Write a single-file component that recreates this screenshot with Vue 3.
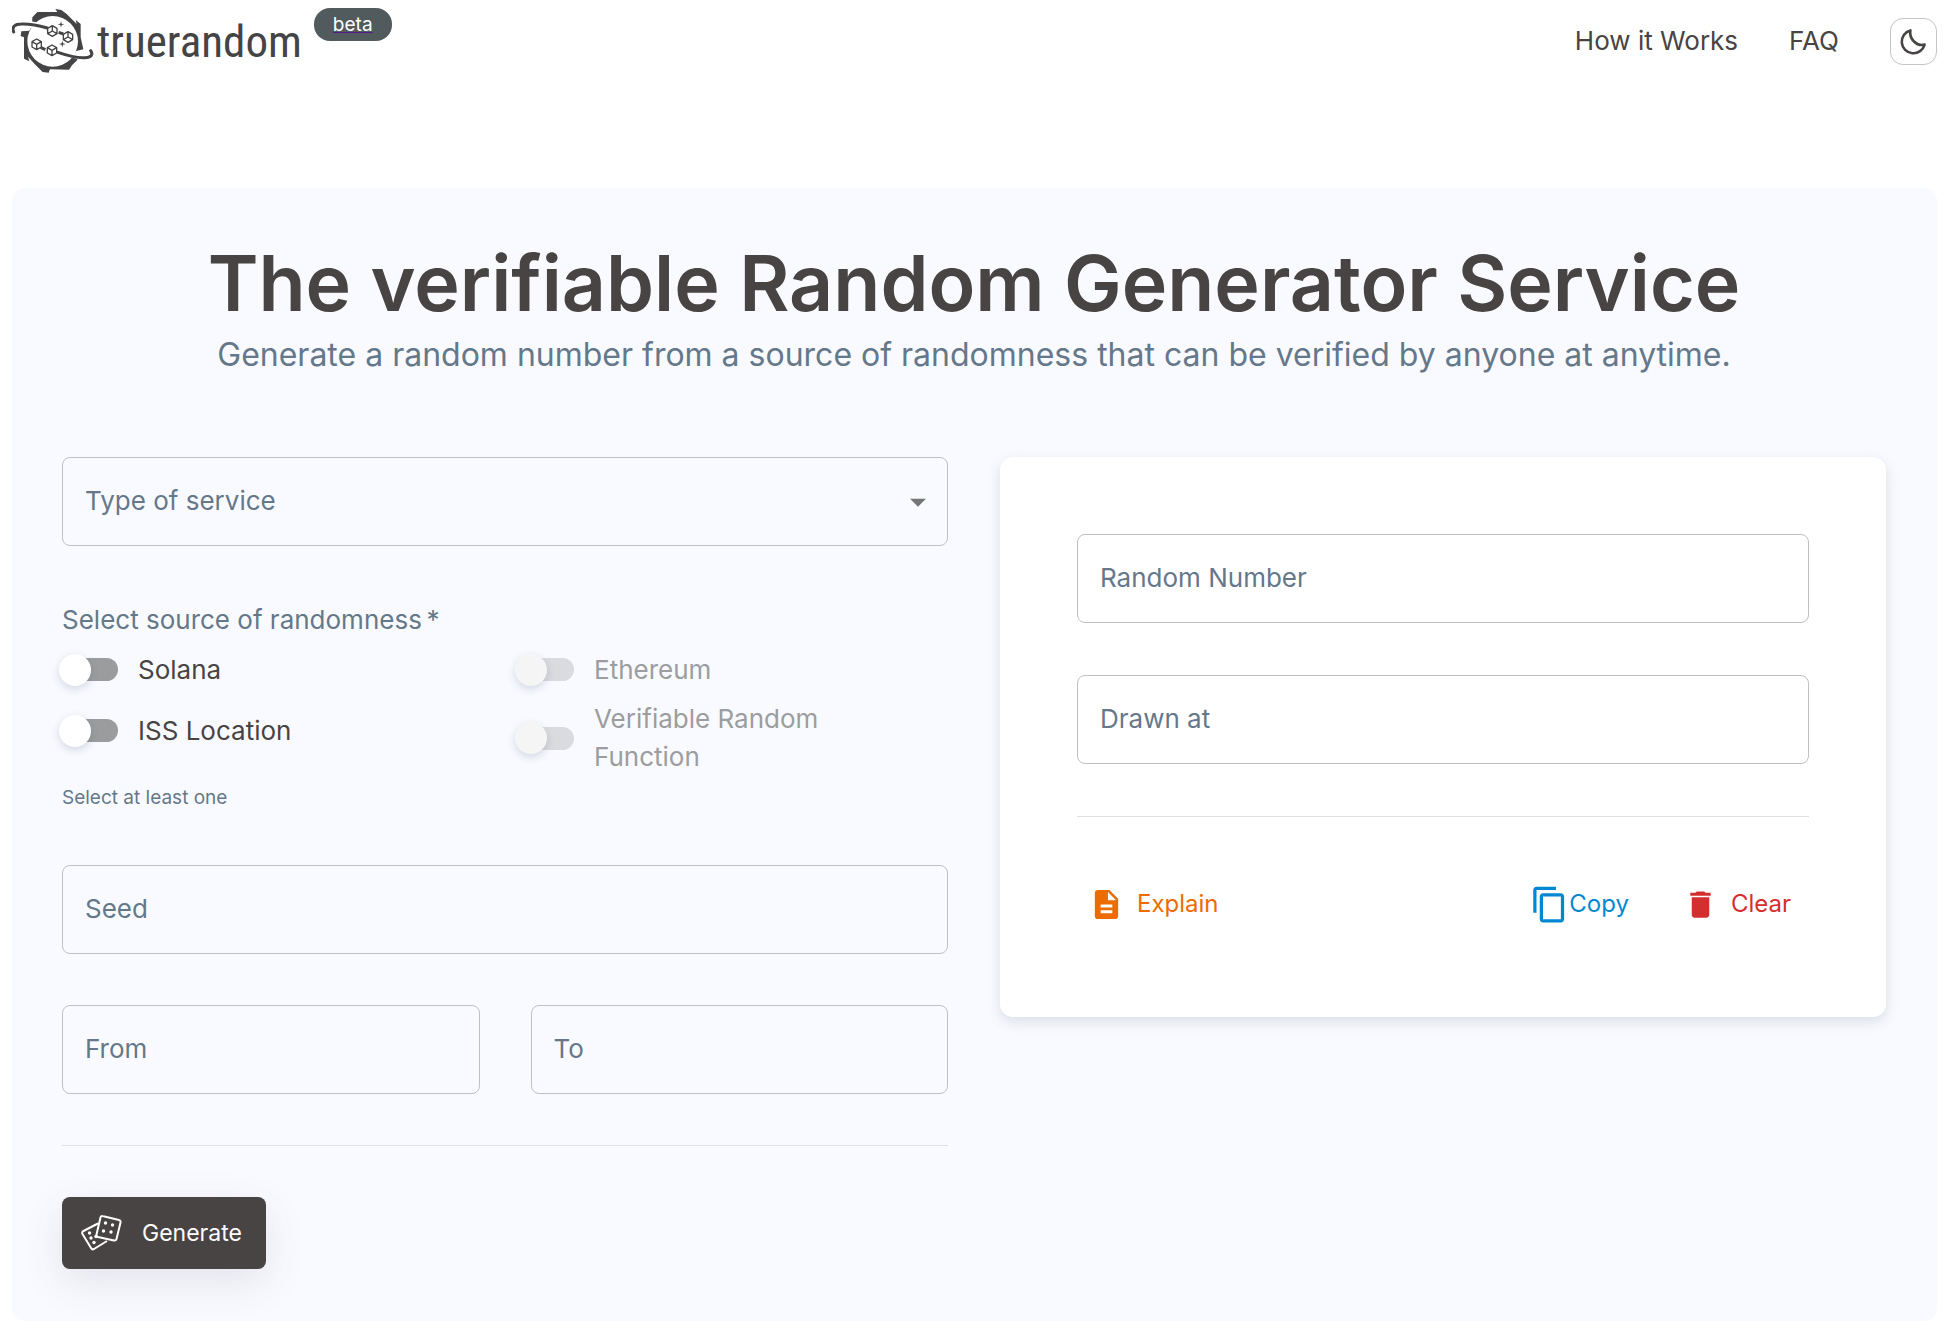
<template>
  <div class="page">
    <header class="navbar">
      <a class="brand" href="#">
        <svg class="brand-mark" viewBox="36 24 255 198" fill="none">
          <path
            fill="#444446"
            fill-rule="evenodd"
            d="M97 52L112 36H172L166 27L184 30L200 42L230 72L227 60L242 72V112L250 148L226 154L232 180L216 196L207 209L150 208L146 218L128 216L106 194L84 170L88 184L72 176V112L62 108L64 94L88 92L96 78ZM158 48A76 76 0 1 0 158 200A76 76 0 1 0 158 48Z"
          />
          <path stroke="#fff" stroke-width="20" d="M60 72C90 70 112 76 145 88M172 154C200 164 226 166 256 168" />
          <path
            stroke="#444446"
            stroke-width="9"
            stroke-linecap="round"
            d="M41 96C34 80 46 72 64 72C95 71 118 77 142 84M174 157C200 166 226 174 252 173C274 174 280 164 272 152"
          />
          <path stroke="#444446" stroke-width="9" d="M176 97L190 102M122 142L136 149" />
          <g stroke="#444446" stroke-width="4" stroke-linejoin="round">
            <path
              v-for="cube in cubes"
              :key="cube.x"
              :transform="`translate(${cube.x} ${cube.y})`"
              :d="cube.d"
              fill="#fff"
            />
          </g>
          <path fill="#444446" d="M183 63L185 71L193 73L185 75L183 83L181 75L173 73L181 71ZM187 122L189 130L197 132L189 134L187 142L185 134L177 132L185 130Z" />
        </svg>
        <span class="brand-name">truerandom</span>
        <span class="badge">beta</span>
      </a>

      <nav class="nav">
        <a class="nav-link" href="#how-it-works">How it Works</a>
        <a class="nav-link" href="#faq">FAQ</a>
        <button class="theme-btn" type="button" aria-label="Toggle dark mode">
          <svg width="31" height="31" viewBox="0 0 24 24" fill="none">
            <path
              d="M9.6 3.4a9 9 0 1 0 11 11C14.5 16 8.4 10 9.6 3.4z"
              stroke="currentColor"
              stroke-width="2"
              stroke-linejoin="round"
            />
          </svg>
        </button>
      </nav>
    </header>

    <main class="hero">
      <h1 class="title">The verifiable Random Generator Service</h1>
      <p class="subtitle">
        Generate a random number from a source of randomness that can be verified by anyone at anytime.
      </p>

      <div class="columns">
        <form class="form" @submit.prevent>
          <div class="field" :class="{ filled: form.service }">
            <label for="service">Type of service</label>
            <select id="service" v-model="form.service">
              <option value="" hidden></option>
              <option value="number">Random number</option>
              <option value="list">Pick from list</option>
            </select>
            <svg class="caret" width="38" height="38" viewBox="0 0 24 24">
              <path d="M7 10l5 5 5-5z" fill="currentColor" />
            </svg>
          </div>

          <fieldset class="sources">
            <legend>Select source of randomness&#8201;*</legend>
            <div class="source-columns">
              <div v-for="(group, index) in sources" :key="index" class="source-group">
                <label
                  v-for="source in group"
                  :key="source.id"
                  class="switch"
                  :class="{ disabled: source.disabled }"
                >
                  <input
                    v-model="form.sources"
                    type="checkbox"
                    :value="source.id"
                    :disabled="source.disabled"
                  />
                  <span>{{ source.label }}</span>
                </label>
              </div>
            </div>
            <p class="hint">Select at least one</p>
          </fieldset>

          <div class="field" :class="{ filled: form.seed }">
            <label for="seed">Seed</label>
            <input id="seed" v-model="form.seed" type="text" />
          </div>

          <div class="range">
            <div class="field" :class="{ filled: form.from }">
              <label for="from">From</label>
              <input id="from" v-model="form.from" type="text" />
            </div>
            <div class="field" :class="{ filled: form.to }">
              <label for="to">To</label>
              <input id="to" v-model="form.to" type="text" />
            </div>
          </div>

          <hr />

          <button class="generate-btn" type="submit">
            <svg width="42" height="38" viewBox="0 0 42 38" fill="none" stroke="currentColor" stroke-width="2" stroke-linejoin="round">
              <path d="M18 9.500L3.500 17Q1.500 18 2.500 20L11 34Q12 36 14 35L27 27" />
              <path d="M22.500 2L39 6Q41 6.500 40.500 8.500L36.500 25Q36 27 34 26.500L18 23Q16 22.500 16.500 20.500L20.500 3.500Q21 1.600 22.500 2Z" />
              <g fill="currentColor" stroke="none">
                <circle v-for="dot in dots" :key="dot.join()" :cx="dot[0]" :cy="dot[1]" r="1.700" />
              </g>
            </svg>
            Generate
          </button>
        </form>

        <section class="card">
          <div class="field">
            <label for="random-number">Random Number</label>
            <input id="random-number" type="text" readonly />
          </div>
          <div class="field">
            <label for="drawn-at">Drawn at</label>
            <input id="drawn-at" type="text" readonly />
          </div>

          <hr />

          <div class="actions">
            <button class="action explain" type="button">
              <svg width="35" height="35" viewBox="0 0 24 24" fill="currentColor">
                <path d="M14 2H6c-1.100 0-1.990.9-1.990 2L4 20c0 1.100.89 2 1.990 2H18c1.100 0 2-.9 2-2V8l-6-6zm2 16H8v-2h8v2zm0-4H8v-2h8v2zm-3-5V3.500L18.500 9H13z" />
              </svg>
              Explain
            </button>
            <button class="action copy" type="button">
              <svg width="39" height="39" viewBox="0 0 24 24" fill="currentColor">
                <path d="M16 1H4c-1.100 0-2 .9-2 2v14h2V3h12V1zm3 4H8c-1.100 0-2 .9-2 2v14c0 1.100.9 2 2 2h11c1.100 0 2-.9 2-2V7c0-1.100-.9-2-2-2zm0 16H8V7h11v14z" />
              </svg>
              Copy
            </button>
            <button class="action clear" type="button">
              <svg width="35" height="35" viewBox="0 0 24 24" fill="currentColor">
                <path d="M6 19c0 1.100.9 2 2 2h8c1.100 0 2-.9 2-2V7H6v12zM19 4h-3.500l-1-1h-5l-1 1H5v2h14V4z" />
              </svg>
              Clear
            </button>
          </div>
        </section>
      </div>
    </main>
  </div>
</template>

<script setup>
import { reactive } from 'vue'

const form = reactive({
  service: '',
  sources: [],
  seed: '',
  from: '',
  to: ''
})

const sources = [
  [
    { id: 'solana', label: 'Solana', disabled: false },
    { id: 'iss', label: 'ISS Location', disabled: false }
  ],
  [
    { id: 'ethereum', label: 'Ethereum', disabled: true },
    { id: 'vrf', label: 'Verifiable Random Function', disabled: true }
  ]
]

// Cubes of the logo: outline plus the three inner edges
const cubeUp = 'M0 -16L14 -8V8L0 16L-14 8V-8ZM0 -16V0L14 8M0 0L-14 8'
const cubeDown = 'M0 -16L14 -8V8L0 16L-14 8V-8ZM-14 -8L0 0L14 -8M0 0V16'
const cubes = [
  { x: 157, y: 93, d: cubeUp },
  { x: 204, y: 111, d: cubeUp },
  { x: 110, y: 133, d: cubeDown },
  { x: 156, y: 151, d: cubeDown }
]

// Pips of the two dice on the generate button
const dots = [
  [25.5, 9], [32.5, 11], [23.5, 17], [31, 18],
  [9.5, 19], [11, 24], [14, 28.5], [16, 22.5]
]
</script>

<style>
body {
  background: #fff;
}
</style>

<style scoped>
.page {
  padding: 0 23px 18px 12px;
  color: #484443;
  font-family: Inter, "Liberation Sans", sans-serif;
  font-size: 26px;
  line-height: 38px;
}

.page * {
  box-sizing: border-box;
}

button,
input,
select {
  font: inherit;
  color: inherit;
}

/* Navbar */
.navbar {
  display: flex;
  justify-content: space-between;
  align-items: center;
  height: 82px;
  margin-bottom: 106px;
}

.brand {
  display: flex;
  align-items: flex-start;
  height: 66px;
  color: inherit;
  text-decoration: none;
}

.brand-mark {
  width: 85px;
  height: 66px;
}

.brand-name {
  color: #444446;
  font-family: "Roboto Condensed", "Liberation Sans Narrow", "Liberation Sans", sans-serif;
  font-size: 45px;
  line-height: 68px;
}

.badge {
  margin-left: 12px;
  padding: 0 19px;
  border-radius: 16px;
  background: #515a5c;
  color: #fff;
  font-size: 19px;
  line-height: 33px;
  text-decoration: underline;
  text-decoration-color: #551a8b;
}

.nav {
  display: flex;
  align-items: center;
  gap: 51px;
}

.nav-link {
  color: inherit;
  text-decoration: none;
}

.theme-btn {
  display: flex;
  align-items: center;
  justify-content: center;
  width: 47px;
  height: 47px;
  padding: 0;
  border: 1px solid #c4c4c4;
  border-radius: 13px;
  background: #fff;
  cursor: pointer;
}

/* Hero */
.hero {
  padding: 50px 51px 52px 50px;
  border-radius: 13px;
  background: #f9faff;
}

.title {
  margin: 0;
  font-size: 77px;
  font-weight: 600;
  line-height: 90px;
  text-align: center;
}

.subtitle {
  margin: 0 0 75px;
  color: #65788a;
  font-size: 32px;
  line-height: 54px;
  text-align: center;
}

.columns {
  display: grid;
  grid-template-columns: 1fr 1fr;
  align-items: start;
  gap: 52px;
}

.form {
  display: flex;
  flex-direction: column;
  gap: 51px;
}

hr {
  width: 100%;
  height: 1px;
  margin: 0;
  border: 0;
  background: #e0e0e3;
}

/* Fields: the label sits in the same grid cell as its control */
.field {
  display: grid;
  align-items: center;
}

.field > * {
  grid-area: 1 / 1;
}

.field label {
  padding: 0 23px 2px;
  color: #65788a;
  pointer-events: none;
}

.field.filled label {
  visibility: hidden;
}

.field input,
.field select {
  width: 100%;
  height: 89px;
  padding: 0 23px;
  border: 1px solid #c0c0c3;
  border-radius: 8px;
  background: transparent;
  appearance: none;
}

.caret {
  justify-self: end;
  margin-right: 11px;
  color: #757576;
  pointer-events: none;
}

/* Sources */
.sources {
  min-width: 0;
  margin: 0;
  padding: 0;
  border: 0;
}

.sources legend {
  padding: 4px 0 0;
  color: #65788a;
}

.source-columns {
  display: grid;
  grid-template-columns: 1fr 1fr;
  gap: 26px;
}

.switch {
  display: flex;
  align-items: center;
  gap: 20px;
  min-height: 61px;
  padding: 0 48px 0 2px;
  cursor: pointer;
}

.switch input {
  display: flex;
  align-items: center;
  flex: none;
  width: 54px;
  height: 23px;
  margin: 0;
  border-radius: 12px;
  background: #9b9c9e;
  appearance: none;
  cursor: pointer;
}

.switch input::before {
  content: "";
  flex: none;
  width: 32px;
  height: 32px;
  margin-left: -5px;
  border-radius: 50%;
  background: #fff;
  box-shadow: 0 3px 8px rgba(60, 80, 110, 0.2);
}

.switch input:checked::before {
  margin-left: 27px;
}

.switch.disabled {
  color: #9c9da0;
  cursor: default;
}

.switch.disabled input {
  background: #dadbdf;
}

.switch.disabled input::before {
  background: #f5f5f5;
}

.hint {
  margin: 6px 0 0;
  color: #65788a;
  font-size: 19px;
  line-height: 32px;
}

.range {
  display: grid;
  grid-template-columns: 1fr 1fr;
  gap: 51px;
}

.generate-btn {
  display: flex;
  align-items: center;
  align-self: flex-start;
  gap: 20px;
  height: 72px;
  padding: 0 24px 0 18px;
  border: 0;
  border-radius: 8px;
  background: #484443;
  color: #fff;
  font-size: 23px;
  box-shadow: 0 13px 40px rgba(72, 68, 90, 0.12);
  cursor: pointer;
}

/* Result card */
.card {
  display: flex;
  flex-direction: column;
  gap: 52px;
  padding: 77px 77px 76px;
  border-radius: 13px;
  background: #fff;
  box-shadow: 0 5px 13px rgba(60, 80, 100, 0.16);
}

.actions {
  display: flex;
  align-items: center;
  gap: 54px;
  height: 72px;
  padding: 0 18px 0 12px;
}

.action {
  display: flex;
  align-items: center;
  padding: 0 0 2px;
  border: 0;
  background: none;
  font-size: 24px;
  cursor: pointer;
}

.explain {
  gap: 13px;
  margin-right: auto;
  color: #ed6c02;
}

.copy {
  color: #0288d1;
}

.clear {
  gap: 13px;
  color: #d32f2f;
}
</style>
